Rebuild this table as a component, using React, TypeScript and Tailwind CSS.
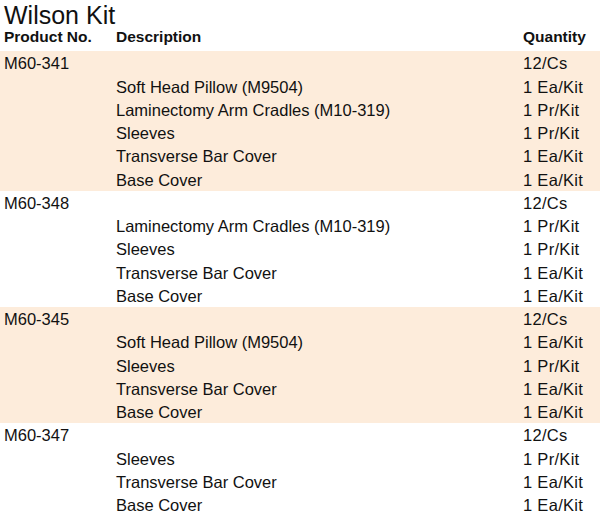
import React from 'react';

type Group = {
  code: string;
  qty: string;
  items: [string, string][];
};

const groups: Group[] = [
  {
    code: 'M60-341',
    qty: '12/Cs',
    items: [
      ['Soft Head Pillow (M9504)', '1 Ea/Kit'],
      ['Laminectomy Arm Cradles (M10-319)', '1 Pr/Kit'],
      ['Sleeves', '1 Pr/Kit'],
      ['Transverse Bar Cover', '1 Ea/Kit'],
      ['Base Cover', '1 Ea/Kit'],
    ],
  },
  {
    code: 'M60-348',
    qty: '12/Cs',
    items: [
      ['Laminectomy Arm Cradles (M10-319)', '1 Pr/Kit'],
      ['Sleeves', '1 Pr/Kit'],
      ['Transverse Bar Cover', '1 Ea/Kit'],
      ['Base Cover', '1 Ea/Kit'],
    ],
  },
  {
    code: 'M60-345',
    qty: '12/Cs',
    items: [
      ['Soft Head Pillow (M9504)', '1 Ea/Kit'],
      ['Sleeves', '1 Pr/Kit'],
      ['Transverse Bar Cover', '1 Ea/Kit'],
      ['Base Cover', '1 Ea/Kit'],
    ],
  },
  {
    code: 'M60-347',
    qty: '12/Cs',
    items: [
      ['Sleeves', '1 Pr/Kit'],
      ['Transverse Bar Cover', '1 Ea/Kit'],
      ['Base Cover', '1 Ea/Kit'],
    ],
  },
];

const Row = ({ a, b, c }: { a?: string; b?: string; c: string }) => (
  <div className="flex items-center h-[23.25px] pt-[2px] text-[16.5px] leading-none">
    <div className="w-[116px] pl-[4px]">{a}</div>
    <div className="flex-1">{b}</div>
    <div className="w-[77px] tracking-[0.3px]">{c}</div>
  </div>
);

export default function App() {
  return (
    <div className="w-[600px] h-[516px] bg-white text-[#111] overflow-hidden" style={{ fontFamily: '"Liberation Sans", sans-serif' }}>
      <div className="h-[28px] pl-[4px] text-[25px] leading-[28px] pt-[1px]">Wilson Kit</div>
      <div className="flex items-start h-[23px] text-[15.5px] font-bold leading-[17px]">
        <div className="w-[116px] pl-[4px]">Product No.</div>
        <div className="flex-1">Description</div>
        <div className="w-[77px]">Quantity</div>
      </div>
      {groups.map((g, i) => (
        <div key={g.code} className={i % 2 === 0 ? 'bg-[#fdecdb]' : 'bg-white'}>
          <Row a={g.code} c={g.qty} />
          {g.items.map(([d, q]) => (
            <Row key={d} b={d} c={q} />
          ))}
        </div>
      ))}
    </div>
  );
}
